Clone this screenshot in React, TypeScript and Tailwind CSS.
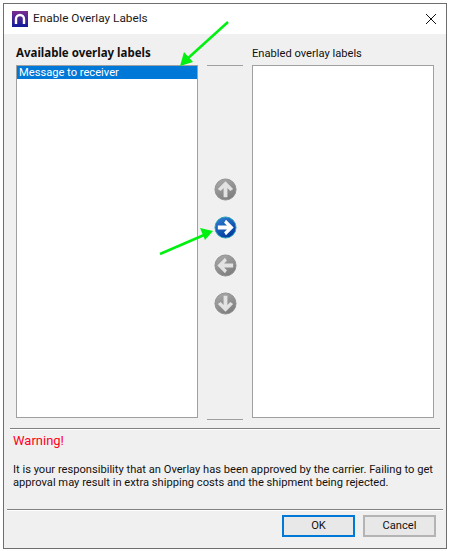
const FONT = "font-['Roboto','Liberation_Sans',sans-serif]";

function RoundArrow({ dir, active }: { dir: "up" | "right" | "left" | "down"; active?: boolean }) {
  const rotate = { up: 0, right: 90, down: 180, left: 270 }[dir];
  const id = `grad-${dir}`;
  return (
    <svg width="23" height="23" viewBox="0 0 24 24">
      <defs>
        <linearGradient id={id} x1="0.2" y1="0" x2="0.7" y2="1">
          <stop offset="0" stopColor={active ? "#2f7fd0" : "#a8a8a8"} />
          <stop offset="1" stopColor={active ? "#00379c" : "#7c7c7c"} />
        </linearGradient>
      </defs>
      <circle cx="12" cy="12" r="11" fill={`url(#${id})`} stroke={active ? "#2aa0b8" : "#8f8f8f"} strokeWidth="1" />
      <path
        d="M12 3.5 L20 11.5 L17 13.5 L14 10.5 L14 20 L10 20 L10 10.5 L7 13.5 L4 11.5 Z"
        fill={active ? "#ffffff" : "#e2e2e2"}
        transform={`rotate(${rotate} 12 12)`}
      />
    </svg>
  );
}

function ListBox({ children }: { children?: React.ReactNode }) {
  return <div className="h-[353px] w-[182px] border border-[#a0a0a0] bg-white">{children}</div>;
}

export default function App() {
  return (
    <div className={`relative h-[551px] w-[450px] overflow-hidden bg-white pl-[3px] pt-[3px] text-[11.15px] text-[#111] ${FONT}`}>
      <div className="flex h-[546px] w-[444px] flex-col border border-[#6e6e6e] bg-[#f0f0f0]">
        {/* Title bar */}
        <div className="flex h-[30px] shrink-0 items-center bg-white pl-[8px] pr-[9px]">
          <svg width="16" height="16" viewBox="0 0 16 16" className="mr-[5px]">
            <defs>
              <linearGradient id="logo" x1="0" y1="0" x2="0" y2="1">
                <stop offset="0" stopColor="#7a2c8f" />
                <stop offset="1" stopColor="#101a9a" />
              </linearGradient>
            </defs>
            <rect width="16" height="16" fill="url(#logo)" />
            <path d="M4 13 V8 a4 4 0 0 1 8 0 V13" fill="none" stroke="#fff" strokeWidth="2.4" />
          </svg>
          <span className="text-[11.8px] text-[#1a1a1a]">Enable Overlay Labels</span>
          <svg width="12" height="12" viewBox="0 0 12 12" className="ml-auto">
            <path d="M1 1 L11 11 M11 1 L1 11" stroke="#111" strokeWidth="1" />
          </svg>
        </div>

        {/* Lists */}
        <div className="flex shrink-0 pl-[12px] pt-[10px]">
          <div className="flex flex-col">
            <div className="h-[21px] font-['Noto_Sans'] text-[11.5px] font-bold leading-[18px]">Available overlay labels</div>
            <ListBox>
              <div className="h-[13px] bg-[#0078d7] pl-[2px] leading-[14px] text-white">Message to receiver</div>
            </ListBox>
          </div>
          <div className="mt-[21px] flex h-[355px] w-[54px] flex-col items-center justify-between">
            <div className="h-px w-[36px] bg-[#a0a0a0]" />
            <div className="mt-[8px] flex flex-col gap-[15px]">
              <RoundArrow dir="up" />
              <RoundArrow dir="right" active />
              <RoundArrow dir="left" />
              <RoundArrow dir="down" />
            </div>
            <div className="h-px w-[36px] bg-[#a0a0a0]" />
          </div>
          <div className="flex flex-col">
            <div className="h-[21px] leading-[20px]">Enabled overlay labels</div>
            <ListBox />
          </div>
        </div>

        {/* Warning */}
        <div className="mx-[6px] mt-[8px] h-[2px] shrink-0 border-t border-[#808080] bg-white" />
        <div className="shrink-0 pl-[9px] pt-[2px]">
          <div className="text-[13px] leading-[18px] text-[#ff0022]">Warning!</div>
          <p className="mt-[13px] w-[425px] leading-[13px]">
            It is your responsibility that an Overlay has been approved by the carrier. Failing to get approval may
            result in extra shipping costs and the shipment being rejected.
          </p>
        </div>

        {/* Buttons */}
        <div className="mx-[3px] mt-[20px] h-[2px] shrink-0 border-t border-[#808080] bg-white" />
        <div className="flex shrink-0 justify-end gap-[8px] pr-[10px] pt-[4px]">
          <button className="h-[22px] w-[73px] border-2 border-[#0078d7] bg-[#e8e8e8] text-[#111]">OK</button>
          <button className="h-[22px] w-[73px] border-2 border-[#b4b4b4] bg-[#e8e8e8] text-[#111]">Cancel</button>
        </div>
      </div>

      {/* Annotation arrows */}
      <svg className="absolute left-0 top-0" width="450" height="551" viewBox="0 0 450 551">
        <path d="M228 22 L186 60" stroke="#00f010" strokeWidth="2.5" fill="none" />
        <path d="M180 66 L184 52 L193 62 Z" fill="#00f010" />
        <path d="M160 254 L204 235" stroke="#00f010" strokeWidth="2.5" fill="none" />
        <path d="M213 231 L200 228 L205 240 Z" fill="#00f010" />
      </svg>
    </div>
  );
}
